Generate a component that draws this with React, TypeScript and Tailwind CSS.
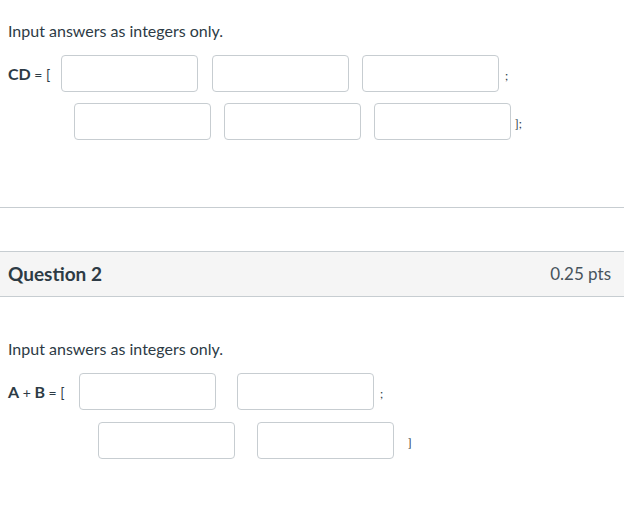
const font = { fontFamily: 'Lato, "Noto Sans", "Liberation Sans", sans-serif' };

function Box({ className = '' }: { className?: string }) {
  return (
    <input
      type="text"
      className={`h-[37px] w-[137px] shrink-0 rounded-[4px] border border-[#c7cdd1] bg-white px-2 text-[15px] outline-none ${className}`}
    />
  );
}

function Sep({ text, className = '' }: { text: string; className?: string }) {
  return <span className={`text-[12px] leading-none text-[#2d3b45] ${className}`}>{text}</span>;
}

export default function App() {
  return (
    <div className="w-[624px] bg-white text-[#2d3b45]" style={font}>
      {/* question 1 tail */}
      <p className="mt-[20px] px-2 text-[16px] leading-[22px]">Input answers as integers only.</p>

      <div className="mt-[13px] flex items-center">
        <span className="w-[61px] shrink-0 pl-2 text-[16px] leading-none">
          <span className="font-bold">CD</span>
          <span className="text-[14px]"> = [</span>
        </span>
        <Box />
        <Box className="ml-[14px]" />
        <Box className="ml-[13px]" />
        <Sep text=";" className="ml-[6px] mt-[4px]" />
      </div>
      <div className="mt-[11px] flex items-center pl-[74px]">
        <Box />
        <Box className="ml-[13px]" />
        <Box className="ml-[13px]" />
        <Sep text="];" className="ml-[4px] mt-[4px]" />
      </div>

      <div className="mt-[67px] border-t border-[#c7cdd1]" />

      {/* question 2 */}
      <div className="mt-[43px] flex h-[46px] items-center justify-between border-y border-[#c7cdd1] bg-[#f5f5f5] pl-2 pr-[13px]">
        <span className="text-[19px] font-bold">Question 2</span>
        <span className="text-[17px] text-[#47535c]">0.25 pts</span>
      </div>

      <p className="mt-[41px] px-2 text-[16px] leading-[22px]">Input answers as integers only.</p>

      <div className="mt-[13px] flex items-center">
        <span className="w-[79px] shrink-0 pl-2 text-[16px] leading-none">
          <span className="font-bold">A</span>
          <span className="text-[14px]"> + </span>
          <span className="font-bold">B</span>
          <span className="text-[14px]"> = [</span>
        </span>
        <Box />
        <Box className="ml-[21px]" />
        <Sep text=";" className="ml-[6px] mt-[4px]" />
      </div>
      <div className="mt-[12px] flex items-center pb-[50px] pl-[98px]">
        <Box />
        <Box className="ml-[22px]" />
        <Sep text="]" className="ml-[14px] mt-[4px]" />
      </div>
    </div>
  );
}
